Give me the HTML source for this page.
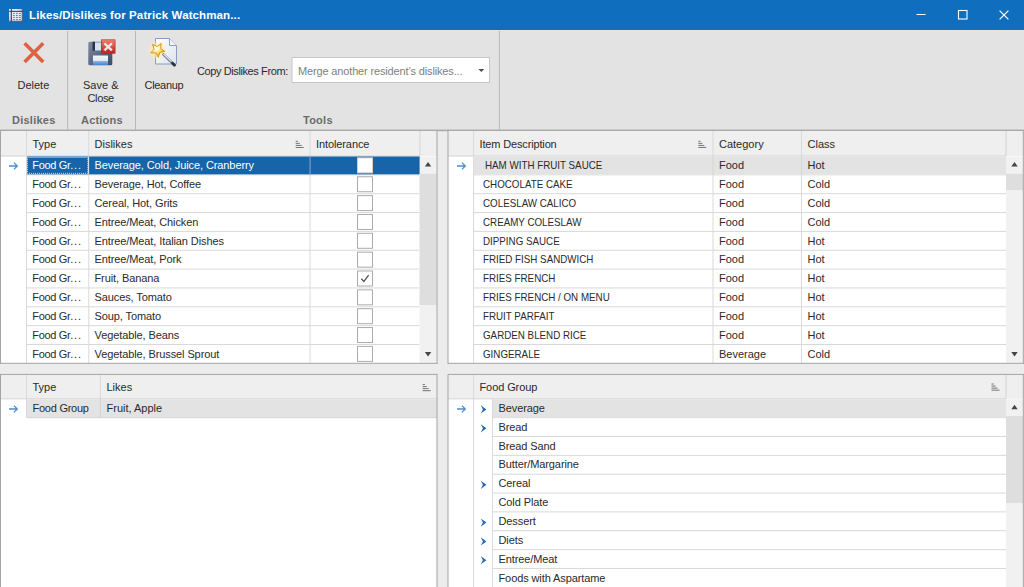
<!DOCTYPE html><html><head><meta charset="utf-8"><style>
*{margin:0;padding:0;box-sizing:border-box}
html,body{width:1024px;height:587px;overflow:hidden;background:#ececec;font-family:"Liberation Sans", sans-serif;font-size:11px;color:#2a2a2a}
.a{position:absolute}
.t{position:absolute;white-space:nowrap;line-height:14px}
.caps{letter-spacing:0px;transform:scaleX(0.89);transform-origin:0 0}
svg{position:absolute;left:0;top:0;overflow:visible}
</style></head><body><svg width="1024" height="587" viewBox="0 0 1024 587"><rect x="0.00" y="0.00" width="1024.00" height="30.00" fill="#106ebe" />
<defs><linearGradient id="ic1" x1="0" y1="0" x2="1" y2="0"><stop offset="0" stop-color="#c9d3e3"/><stop offset="0.5" stop-color="#f4f6fa"/><stop offset="1" stop-color="#aab6ca"/></linearGradient>
<linearGradient id="ic2" x1="0" y1="0" x2="0" y2="1"><stop offset="0" stop-color="#f4f6fa"/><stop offset="1" stop-color="#b9c4d6"/></linearGradient>
<linearGradient id="ic3" x1="0" y1="0" x2="1" y2="1"><stop offset="0" stop-color="#ffffff"/><stop offset="1" stop-color="#d9e0ec"/></linearGradient></defs>
<rect x="9.2" y="9.2" width="13.5" height="12.5" fill="url(#ic3)"/>
<rect x="9.2" y="9.2" width="13.5" height="1.7" fill="url(#ic1)"/>
<rect x="9.2" y="9.2" width="1.7" height="12.5" fill="url(#ic2)"/>
<rect x="9.2" y="10.8" width="13.5" height="1.1" fill="#2f4468"/>
<rect x="10.8" y="9.2" width="1.1" height="12.5" fill="#2f4468"/>
<rect x="21.8" y="9.2" width="0.95" height="12.5" fill="#34496c"/>
<rect x="9.2" y="20.8" width="13.5" height="0.95" fill="#34496c"/>
<g fill="#7d8088">
<rect x="12.9" y="12.8" width="1.9" height="1.1"/><rect x="15.9" y="12.8" width="1.9" height="1.1"/><rect x="18.9" y="12.8" width="1.9" height="1.1"/>
<rect x="12.9" y="14.9" width="1.9" height="1.1"/><rect x="15.9" y="14.9" width="1.9" height="1.1"/><rect x="18.9" y="14.9" width="1.9" height="1.1"/>
<rect x="12.9" y="16.9" width="1.9" height="1.1"/><rect x="15.9" y="16.9" width="1.9" height="1.1"/><rect x="18.9" y="16.9" width="1.9" height="1.1"/>
<rect x="12.9" y="19.0" width="1.9" height="1.1"/><rect x="15.9" y="19.0" width="1.9" height="1.1"/><rect x="18.9" y="19.0" width="1.9" height="1.1"/>
</g>
<rect x="916.5" y="14" width="9" height="1" fill="#fff"/>
<rect x="958.5" y="10.5" width="8.5" height="8.5" fill="none" stroke="#fff" stroke-width="1.1"/>
<path d="M999.6 10.6 L1008.4 19.4 M1008.4 10.6 L999.6 19.4" stroke="#fff" stroke-width="1.2" fill="none"/>
<rect x="0.00" y="30.00" width="1024.00" height="100.50" fill="#e3e3e3" />
<rect x="0.00" y="129.60" width="1024.00" height="1.60" fill="#a9a9a9" />
<rect x="67.10" y="31.00" width="1.00" height="99.00" fill="#b8b8b8" />
<rect x="135.00" y="31.00" width="1.00" height="99.00" fill="#b8b8b8" />
<rect x="498.90" y="31.00" width="1.00" height="99.00" fill="#b8b8b8" />
<path d="M24.6 43.3 L43.2 61.9 M43.2 43.3 L24.6 61.9" stroke="#de6242" stroke-width="3.6" fill="none"/>
<defs>
<linearGradient id="fb" x1="0" y1="0" x2="1" y2="1"><stop offset="0" stop-color="#7c8aa3"/><stop offset="1" stop-color="#3d4b66"/></linearGradient>
<linearGradient id="lb" x1="0" y1="0" x2="0" y2="1"><stop offset="0" stop-color="#f4f6fa"/><stop offset="0.55" stop-color="#e4e8f0"/><stop offset="0.6" stop-color="#8bb4e0"/><stop offset="1" stop-color="#3f86cf"/></linearGradient>
<linearGradient id="rx" x1="0" y1="0" x2="0" y2="1"><stop offset="0" stop-color="#f0806c"/><stop offset="1" stop-color="#c0211c"/></linearGradient>
<linearGradient id="pg" x1="0" y1="0" x2="1" y2="1"><stop offset="0" stop-color="#ffffff"/><stop offset="1" stop-color="#dde3ef"/></linearGradient>
<radialGradient id="st" cx="0.35" cy="0.3" r="0.75"><stop offset="0" stop-color="#ffffff"/><stop offset="0.35" stop-color="#fff3b0"/><stop offset="0.7" stop-color="#f6c933"/><stop offset="1" stop-color="#eda21e"/></radialGradient>
<radialGradient id="gl" cx="0.5" cy="0.5" r="0.5"><stop offset="0" stop-color="#fff2a0" stop-opacity="1"/><stop offset="0.6" stop-color="#fff2a0" stop-opacity="0.6"/><stop offset="1" stop-color="#fff2a0" stop-opacity="0"/></radialGradient>
</defs>
<g transform="translate(86,38)">
<rect x="2.3" y="3.7" width="24" height="23.5" rx="1.5" fill="url(#fb)"/>
<rect x="6.5" y="3.7" width="2.5" height="9" fill="#2c3548"/>
<rect x="9" y="4.5" width="6" height="8" fill="#d5e2f0"/>
<rect x="7" y="17.5" width="15" height="9.5" fill="url(#lb)"/>
<rect x="15.3" y="1.8" width="13.8" height="13.5" fill="url(#rx)" stroke="#b02a22" stroke-width="0.6"/>
<path d="M18.4 5.4 L25.9 12.3 M25.9 5.4 L18.4 12.3" stroke="#ece6e6" stroke-width="2.3"/>
</g>
<g transform="translate(148,36)">
<path d="M7.5 2.5 H21.5 L28.5 9.5 V28 H7.5 Z" fill="url(#pg)" stroke="#8d9cc6" stroke-width="1"/>
<path d="M21.5 2.5 V9.5 H28.5" fill="#f2f4f8" stroke="#8d9cc6" stroke-width="1"/>
<circle cx="9.5" cy="14" r="10" fill="url(#gl)"/>
<path d="M15.5 18.5 L26.6 29.2" stroke="#7a8394" stroke-width="2.6" stroke-linecap="round"/>
<path d="M15.6 18.0 L23.5 25.6" stroke="#e2e7ef" stroke-width="1.2"/>
<path d="M24.5 27.2 L26.6 29.2" stroke="#2a3242" stroke-width="2.6" stroke-linecap="round"/>
<path d="M4.55 8.40 L9.14 10.52 L13.20 7.49 L12.61 12.52 L16.74 15.44 L11.78 16.43 L10.27 21.26 L7.80 16.84 L2.74 16.91 L6.17 13.19 Z" fill="url(#st)" stroke="#e0902a" stroke-width="1" stroke-linejoin="round"/>
</g>
<rect x="292.00" y="57.50" width="197.50" height="25.00" fill="#fff" stroke="#c6c6c6" stroke-width="1"/>
<path d="M478.3 68.9 H484.3 L481.3 72.1 Z" fill="#505050"/>
<rect x="0.00" y="131.00" width="437.00" height="232.30" fill="#fff" />
<rect x="0.00" y="131.00" width="437.00" height="25.00" fill="#efefef" />
<rect x="0.00" y="155.50" width="419.60" height="1.00" fill="#d4d4d4" />
<rect x="26.00" y="131.00" width="1.00" height="232.00" fill="#d9d9d9" />
<rect x="88.30" y="131.00" width="1.00" height="232.00" fill="#d9d9d9" />
<rect x="309.56" y="131.00" width="1.00" height="232.00" fill="#d9d9d9" />
<rect x="26.50" y="174.35" width="393.10" height="1.00" fill="#d9d9d9" />
<rect x="26.50" y="193.20" width="393.10" height="1.00" fill="#d9d9d9" />
<rect x="26.50" y="212.05" width="393.10" height="1.00" fill="#d9d9d9" />
<rect x="26.50" y="230.90" width="393.10" height="1.00" fill="#d9d9d9" />
<rect x="26.50" y="249.75" width="393.10" height="1.00" fill="#d9d9d9" />
<rect x="26.50" y="268.60" width="393.10" height="1.00" fill="#d9d9d9" />
<rect x="26.50" y="287.45" width="393.10" height="1.00" fill="#d9d9d9" />
<rect x="26.50" y="306.30" width="393.10" height="1.00" fill="#d9d9d9" />
<rect x="26.50" y="325.15" width="393.10" height="1.00" fill="#d9d9d9" />
<rect x="26.50" y="344.00" width="393.10" height="1.00" fill="#d9d9d9" />
<rect x="27.00" y="156.50" width="393.00" height="17.85" fill="#1764a8" />
<rect x="88.10" y="156.50" width="1.00" height="17.85" fill="#e4ebf3" />
<rect x="309.56" y="156.50" width="1.00" height="17.85" fill="#86a9cf" />
<rect x="27.5" y="157.50" width="60.3" height="15.85" fill="none" stroke="#d6e4f2" stroke-width="1" stroke-dasharray="1 1"/>
<rect x="357.50" y="157.90" width="15.00" height="15.00" fill="#fff" stroke="#d9cdc4" stroke-width="1"/>
<rect x="357.50" y="176.75" width="15.00" height="15.00" fill="#fff" stroke="#ababab" stroke-width="1"/>
<rect x="357.50" y="195.60" width="15.00" height="15.00" fill="#fff" stroke="#ababab" stroke-width="1"/>
<rect x="357.50" y="214.45" width="15.00" height="15.00" fill="#fff" stroke="#ababab" stroke-width="1"/>
<rect x="357.50" y="233.30" width="15.00" height="15.00" fill="#fff" stroke="#ababab" stroke-width="1"/>
<rect x="357.50" y="252.15" width="15.00" height="15.00" fill="#fff" stroke="#ababab" stroke-width="1"/>
<rect x="357.50" y="271.00" width="15.00" height="15.00" fill="#fff" stroke="#ababab" stroke-width="1"/>
<path d="M361.3 278.8 L363.9 281.5 L368.6 275.1" stroke="#555" stroke-width="1.3" fill="none"/>
<rect x="357.50" y="289.85" width="15.00" height="15.00" fill="#fff" stroke="#ababab" stroke-width="1"/>
<rect x="357.50" y="308.70" width="15.00" height="15.00" fill="#fff" stroke="#ababab" stroke-width="1"/>
<rect x="357.50" y="327.55" width="15.00" height="15.00" fill="#fff" stroke="#ababab" stroke-width="1"/>
<rect x="357.50" y="346.40" width="15.00" height="15.00" fill="#fff" stroke="#ababab" stroke-width="1"/>
<path d="M9 166 H17.2 M13.9 162.6 L17.3 166 L13.9 169.4" stroke="#4f8dcc" stroke-width="1.3" fill="none"/>
<rect x="295.70" y="140.80" width="2.20" height="1.05" fill="#7a7a7a" />
<rect x="295.70" y="142.85" width="4.10" height="1.05" fill="#7a7a7a" />
<rect x="295.70" y="144.90" width="6.00" height="1.05" fill="#7a7a7a" />
<rect x="295.70" y="146.95" width="8.00" height="1.05" fill="#7a7a7a" />
<rect x="419.60" y="156.50" width="16.90" height="206.30" fill="#f1f1f1" />
<rect x="419.60" y="173.80" width="16.90" height="131.20" fill="#dedede" />
<path d="M424.85 166.5 L428.05 162.0 L431.25 166.5 Z" fill="#454545"/>
<path d="M424.85 351.90000000000003 L428.05 356.40000000000003 L431.25 351.90000000000003 Z" fill="#454545"/>
<rect x="0.00" y="131.00" width="1.00" height="232.50" fill="#a4a4a4" />
<rect x="436.50" y="131.00" width="1.00" height="232.80" fill="#a4a4a4" />
<rect x="0.00" y="362.80" width="437.50" height="1.00" fill="#a4a4a4" />
<rect x="448.00" y="131.00" width="575.00" height="232.30" fill="#fff" />
<rect x="448.00" y="131.00" width="575.00" height="25.00" fill="#efefef" />
<rect x="448.00" y="155.50" width="558.00" height="1.00" fill="#d4d4d4" />
<rect x="473.10" y="131.00" width="1.00" height="232.00" fill="#d9d9d9" />
<rect x="712.50" y="131.00" width="1.00" height="232.00" fill="#d9d9d9" />
<rect x="801.00" y="131.00" width="1.00" height="232.00" fill="#d9d9d9" />
<rect x="1005.50" y="131.00" width="1.00" height="25.00" fill="#d4d4d4" />
<rect x="419.40" y="131.00" width="1.00" height="25.00" fill="#d4d4d4" />
<rect x="473.60" y="174.35" width="532.40" height="1.00" fill="#d9d9d9" />
<rect x="473.60" y="193.20" width="532.40" height="1.00" fill="#d9d9d9" />
<rect x="473.60" y="212.05" width="532.40" height="1.00" fill="#d9d9d9" />
<rect x="473.60" y="230.90" width="532.40" height="1.00" fill="#d9d9d9" />
<rect x="473.60" y="249.75" width="532.40" height="1.00" fill="#d9d9d9" />
<rect x="473.60" y="268.60" width="532.40" height="1.00" fill="#d9d9d9" />
<rect x="473.60" y="287.45" width="532.40" height="1.00" fill="#d9d9d9" />
<rect x="473.60" y="306.30" width="532.40" height="1.00" fill="#d9d9d9" />
<rect x="473.60" y="325.15" width="532.40" height="1.00" fill="#d9d9d9" />
<rect x="473.60" y="344.00" width="532.40" height="1.00" fill="#d9d9d9" />
<rect x="474.10" y="156.50" width="531.90" height="17.85" fill="#e3e3e3" />
<rect x="712.50" y="156.00" width="1.00" height="18.85" fill="#d6d6d6" />
<rect x="801.00" y="156.00" width="1.00" height="18.85" fill="#d6d6d6" />
<path d="M457 166 H465.2 M461.9 162.6 L465.3 166 L461.9 169.4" stroke="#4f8dcc" stroke-width="1.3" fill="none"/>
<rect x="698.30" y="140.80" width="2.20" height="1.05" fill="#7a7a7a" />
<rect x="698.30" y="142.85" width="4.10" height="1.05" fill="#7a7a7a" />
<rect x="698.30" y="144.90" width="6.00" height="1.05" fill="#7a7a7a" />
<rect x="698.30" y="146.95" width="8.00" height="1.05" fill="#7a7a7a" />
<rect x="1006.00" y="156.50" width="17.00" height="206.30" fill="#f1f1f1" />
<rect x="1006.00" y="173.80" width="17.00" height="16.30" fill="#dedede" />
<path d="M1011.3 166.5 L1014.5 162.0 L1017.7 166.5 Z" fill="#454545"/>
<path d="M1011.3 351.90000000000003 L1014.5 356.40000000000003 L1017.7 351.90000000000003 Z" fill="#454545"/>
<rect x="447.50" y="131.00" width="1.00" height="232.80" fill="#a4a4a4" />
<rect x="1022.80" y="131.00" width="1.00" height="232.80" fill="#a4a4a4" />
<rect x="448.00" y="362.80" width="576.00" height="1.00" fill="#a4a4a4" />
<rect x="0.00" y="374.40" width="437.00" height="212.60" fill="#fff" />
<rect x="0.00" y="374.40" width="437.00" height="24.40" fill="#efefef" />
<rect x="0.00" y="398.30" width="437.00" height="1.00" fill="#d4d4d4" />
<rect x="26.00" y="374.40" width="1.00" height="43.25" fill="#d9d9d9" />
<rect x="99.90" y="374.40" width="1.00" height="43.25" fill="#d9d9d9" />
<rect x="27.00" y="399.30" width="410.00" height="18.35" fill="#e3e3e3" />
<rect x="99.90" y="398.80" width="1.00" height="18.85" fill="#d2d2d2" />
<rect x="26.50" y="417.15" width="410.50" height="1.00" fill="#d4d4d4" />
<path d="M9 409 H17.2 M13.9 405.6 L17.3 409 L13.9 412.4" stroke="#4f8dcc" stroke-width="1.3" fill="none"/>
<rect x="422.70" y="384.00" width="2.20" height="1.05" fill="#7a7a7a" />
<rect x="422.70" y="386.05" width="4.10" height="1.05" fill="#7a7a7a" />
<rect x="422.70" y="388.10" width="6.00" height="1.05" fill="#7a7a7a" />
<rect x="422.70" y="390.15" width="8.00" height="1.05" fill="#7a7a7a" />
<rect x="0.00" y="374.40" width="1.00" height="212.60" fill="#a4a4a4" />
<rect x="436.50" y="374.40" width="1.00" height="212.60" fill="#a4a4a4" />
<rect x="0.00" y="373.90" width="437.50" height="1.00" fill="#a4a4a4" />
<rect x="448.00" y="374.40" width="575.00" height="212.60" fill="#fff" />
<rect x="448.00" y="374.40" width="575.00" height="24.40" fill="#efefef" />
<rect x="448.00" y="398.30" width="558.00" height="1.00" fill="#d4d4d4" />
<rect x="473.10" y="374.40" width="1.00" height="212.60" fill="#d9d9d9" />
<rect x="1005.50" y="374.40" width="1.00" height="24.40" fill="#d4d4d4" />
<rect x="492.00" y="398.80" width="1.00" height="188.20" fill="#d9d9d9" />
<rect x="492.50" y="417.15" width="513.50" height="1.00" fill="#d9d9d9" />
<rect x="492.50" y="436.00" width="513.50" height="1.00" fill="#d9d9d9" />
<rect x="492.50" y="454.85" width="513.50" height="1.00" fill="#d9d9d9" />
<rect x="492.50" y="473.70" width="513.50" height="1.00" fill="#d9d9d9" />
<rect x="492.50" y="492.55" width="513.50" height="1.00" fill="#d9d9d9" />
<rect x="492.50" y="511.40" width="513.50" height="1.00" fill="#d9d9d9" />
<rect x="492.50" y="530.25" width="513.50" height="1.00" fill="#d9d9d9" />
<rect x="492.50" y="549.10" width="513.50" height="1.00" fill="#d9d9d9" />
<rect x="492.50" y="567.95" width="513.50" height="1.00" fill="#d9d9d9" />
<rect x="493.00" y="399.30" width="513.00" height="17.85" fill="#e3e3e3" />
<path d="M480.8 405.32 L486.4 409.43 L480.8 413.53 L482.9 409.43 Z" fill="#2568ae"/>
<path d="M480.8 424.18 L486.4 428.28 L480.8 432.38 L482.9 428.28 Z" fill="#2568ae"/>
<path d="M480.8 480.73 L486.4 484.83 L480.8 488.93 L482.9 484.83 Z" fill="#2568ae"/>
<path d="M480.8 518.43 L486.4 522.53 L480.8 526.63 L482.9 522.53 Z" fill="#2568ae"/>
<path d="M480.8 537.27 L486.4 541.38 L480.8 545.48 L482.9 541.38 Z" fill="#2568ae"/>
<path d="M480.8 556.12 L486.4 560.23 L480.8 564.33 L482.9 560.23 Z" fill="#2568ae"/>
<path d="M480.8 593.82 L486.4 597.92 L480.8 602.02 L482.9 597.92 Z" fill="#2568ae"/>
<path d="M457 409 H465.2 M461.9 405.6 L465.3 409 L461.9 412.4" stroke="#4f8dcc" stroke-width="1.3" fill="none"/>
<rect x="991.50" y="383.50" width="2.20" height="1.05" fill="#7a7a7a" />
<rect x="991.50" y="385.55" width="4.10" height="1.05" fill="#7a7a7a" />
<rect x="991.50" y="387.60" width="6.00" height="1.05" fill="#7a7a7a" />
<rect x="991.50" y="389.65" width="8.00" height="1.05" fill="#7a7a7a" />
<rect x="1006.00" y="399.30" width="17.00" height="187.70" fill="#f1f1f1" />
<rect x="1006.00" y="416.00" width="17.00" height="87.00" fill="#dedede" />
<path d="M1011.3 409.3 L1014.5 404.8 L1017.7 409.3 Z" fill="#454545"/>
<rect x="447.50" y="374.40" width="1.00" height="212.60" fill="#a4a4a4" />
<rect x="1022.80" y="374.40" width="1.00" height="212.60" fill="#a4a4a4" />
<rect x="448.00" y="373.90" width="576.00" height="1.00" fill="#a4a4a4" /></svg>
<div class="t " style="left:29px;top:7px;color:#fff;font-weight:bold;font-size:11.5px;line-height:16px;letter-spacing:0.12px">Likes/Dislikes for Patrick Watchman...</div>
<div class="t " style="left:17.5px;top:78px;">Delete</div>
<div class="t " style="left:83px;top:78px;">Save &amp;</div>
<div class="t " style="left:87.5px;top:91px;letter-spacing:-0.35px">Close</div>
<div class="t " style="left:144.5px;top:78px;letter-spacing:-0.3px">Cleanup</div>
<div class="t " style="left:12px;top:113px;font-weight:bold;color:#6b6b6b;letter-spacing:0.25px">Dislikes</div>
<div class="t " style="left:81px;top:113px;font-weight:bold;color:#6b6b6b;letter-spacing:0.2px">Actions</div>
<div class="t " style="left:303px;top:113px;font-weight:bold;color:#6b6b6b;letter-spacing:0.25px">Tools</div>
<div class="t " style="left:197px;top:63.5px;letter-spacing:-0.4px">Copy Dislikes From:</div>
<div class="t " style="left:298px;top:63.5px;color:#808080;letter-spacing:-0.15px">Merge another resident’s dislikes...</div>
<div class="t " style="left:32.3px;top:158.1px;color:#fff;letter-spacing:-0.35px">Food Gr<span style="letter-spacing:0.8px">...</span></div>
<div class="t " style="left:94.5px;top:158.1px;color:#fff;letter-spacing:-0.1px">Beverage, Cold, Juice, Cranberry</div>
<div class="t " style="left:32.3px;top:176.95px;color:#2a2a2a;letter-spacing:-0.35px">Food Gr<span style="letter-spacing:0.8px">...</span></div>
<div class="t " style="left:94.5px;top:176.95px;color:#2a2a2a;letter-spacing:-0.1px">Beverage, Hot, Coffee</div>
<div class="t " style="left:32.3px;top:195.79999999999998px;color:#2a2a2a;letter-spacing:-0.35px">Food Gr<span style="letter-spacing:0.8px">...</span></div>
<div class="t " style="left:94.5px;top:195.79999999999998px;color:#2a2a2a;letter-spacing:-0.1px">Cereal, Hot, Grits</div>
<div class="t " style="left:32.3px;top:214.65px;color:#2a2a2a;letter-spacing:-0.35px">Food Gr<span style="letter-spacing:0.8px">...</span></div>
<div class="t " style="left:94.5px;top:214.65px;color:#2a2a2a;letter-spacing:-0.1px">Entree/Meat, Chicken</div>
<div class="t " style="left:32.3px;top:233.5px;color:#2a2a2a;letter-spacing:-0.35px">Food Gr<span style="letter-spacing:0.8px">...</span></div>
<div class="t " style="left:94.5px;top:233.5px;color:#2a2a2a;letter-spacing:-0.1px">Entree/Meat, Italian Dishes</div>
<div class="t " style="left:32.3px;top:252.35px;color:#2a2a2a;letter-spacing:-0.35px">Food Gr<span style="letter-spacing:0.8px">...</span></div>
<div class="t " style="left:94.5px;top:252.35px;color:#2a2a2a;letter-spacing:-0.1px">Entree/Meat, Pork</div>
<div class="t " style="left:32.3px;top:271.20000000000005px;color:#2a2a2a;letter-spacing:-0.35px">Food Gr<span style="letter-spacing:0.8px">...</span></div>
<div class="t " style="left:94.5px;top:271.20000000000005px;color:#2a2a2a;letter-spacing:-0.1px">Fruit, Banana</div>
<div class="t " style="left:32.3px;top:290.05000000000007px;color:#2a2a2a;letter-spacing:-0.35px">Food Gr<span style="letter-spacing:0.8px">...</span></div>
<div class="t " style="left:94.5px;top:290.05000000000007px;color:#2a2a2a;letter-spacing:-0.1px">Sauces, Tomato</div>
<div class="t " style="left:32.3px;top:308.90000000000003px;color:#2a2a2a;letter-spacing:-0.35px">Food Gr<span style="letter-spacing:0.8px">...</span></div>
<div class="t " style="left:94.5px;top:308.90000000000003px;color:#2a2a2a;letter-spacing:-0.1px">Soup, Tomato</div>
<div class="t " style="left:32.3px;top:327.75px;color:#2a2a2a;letter-spacing:-0.35px">Food Gr<span style="letter-spacing:0.8px">...</span></div>
<div class="t " style="left:94.5px;top:327.75px;color:#2a2a2a;letter-spacing:-0.1px">Vegetable, Beans</div>
<div class="t " style="left:32.3px;top:346.6px;color:#2a2a2a;letter-spacing:-0.35px">Food Gr<span style="letter-spacing:0.8px">...</span></div>
<div class="t " style="left:94.5px;top:346.6px;color:#2a2a2a;letter-spacing:-0.1px">Vegetable, Brussel Sprout</div>
<div class="t " style="left:32.5px;top:136.6px;">Type</div>
<div class="t " style="left:94.5px;top:136.6px;">Dislikes</div>
<div class="t " style="left:316px;top:136.6px;letter-spacing:-0.1px">Intolerance</div>
<div class="t caps" style="left:485.0px;top:158.1px;">HAM WITH FRUIT SAUCE</div>
<div class="t " style="left:719px;top:158.1px;">Food</div>
<div class="t " style="left:807.5px;top:158.1px;">Hot</div>
<div class="t caps" style="left:482.5px;top:176.95px;">CHOCOLATE CAKE</div>
<div class="t " style="left:719px;top:176.95px;">Food</div>
<div class="t " style="left:807.5px;top:176.95px;">Cold</div>
<div class="t caps" style="left:482.5px;top:195.79999999999998px;">COLESLAW CALICO</div>
<div class="t " style="left:719px;top:195.79999999999998px;">Food</div>
<div class="t " style="left:807.5px;top:195.79999999999998px;">Cold</div>
<div class="t caps" style="left:482.5px;top:214.65px;">CREAMY COLESLAW</div>
<div class="t " style="left:719px;top:214.65px;">Food</div>
<div class="t " style="left:807.5px;top:214.65px;">Cold</div>
<div class="t caps" style="left:482.5px;top:233.5px;">DIPPING SAUCE</div>
<div class="t " style="left:719px;top:233.5px;">Food</div>
<div class="t " style="left:807.5px;top:233.5px;">Hot</div>
<div class="t caps" style="left:482.5px;top:252.35px;">FRIED FISH SANDWICH</div>
<div class="t " style="left:719px;top:252.35px;">Food</div>
<div class="t " style="left:807.5px;top:252.35px;">Hot</div>
<div class="t caps" style="left:482.5px;top:271.20000000000005px;">FRIES FRENCH</div>
<div class="t " style="left:719px;top:271.20000000000005px;">Food</div>
<div class="t " style="left:807.5px;top:271.20000000000005px;">Hot</div>
<div class="t caps" style="left:482.5px;top:290.05000000000007px;">FRIES FRENCH / ON MENU</div>
<div class="t " style="left:719px;top:290.05000000000007px;">Food</div>
<div class="t " style="left:807.5px;top:290.05000000000007px;">Hot</div>
<div class="t caps" style="left:482.5px;top:308.90000000000003px;">FRUIT PARFAIT</div>
<div class="t " style="left:719px;top:308.90000000000003px;">Food</div>
<div class="t " style="left:807.5px;top:308.90000000000003px;">Hot</div>
<div class="t caps" style="left:482.5px;top:327.75px;">GARDEN BLEND RICE</div>
<div class="t " style="left:719px;top:327.75px;">Food</div>
<div class="t " style="left:807.5px;top:327.75px;">Hot</div>
<div class="t caps" style="left:482.5px;top:346.6px;">GINGERALE</div>
<div class="t " style="left:719px;top:346.6px;">Beverage</div>
<div class="t " style="left:807.5px;top:346.6px;">Cold</div>
<div class="t " style="left:479.5px;top:136.6px;letter-spacing:-0.15px">Item Description</div>
<div class="t " style="left:719px;top:136.6px;">Category</div>
<div class="t " style="left:807.5px;top:136.6px;">Class</div>
<div class="t " style="left:32.5px;top:401.40000000000003px;letter-spacing:-0.25px">Food Group</div>
<div class="t " style="left:106.5px;top:401.40000000000003px;">Fruit, Apple</div>
<div class="t " style="left:32.5px;top:379.8px;">Type</div>
<div class="t " style="left:106.5px;top:379.8px;">Likes</div>
<div class="t " style="left:498.5px;top:400.90000000000003px;letter-spacing:-0.1px">Beverage</div>
<div class="t " style="left:498.5px;top:419.75000000000006px;letter-spacing:-0.1px">Bread</div>
<div class="t " style="left:498.5px;top:438.6px;letter-spacing:-0.1px">Bread Sand</div>
<div class="t " style="left:498.5px;top:457.45000000000005px;letter-spacing:-0.1px">Butter/Margarine</div>
<div class="t " style="left:498.5px;top:476.30000000000007px;letter-spacing:-0.1px">Cereal</div>
<div class="t " style="left:498.5px;top:495.15000000000003px;letter-spacing:-0.1px">Cold Plate</div>
<div class="t " style="left:498.5px;top:514.0px;letter-spacing:-0.1px">Dessert</div>
<div class="t " style="left:498.5px;top:532.85px;letter-spacing:-0.1px">Diets</div>
<div class="t " style="left:498.5px;top:551.7px;letter-spacing:-0.1px">Entree/Meat</div>
<div class="t " style="left:498.5px;top:570.5500000000001px;letter-spacing:-0.1px">Foods with Aspartame</div>
<div class="t " style="left:498.5px;top:589.4px;letter-spacing:-0.1px">Fruit</div>
<div class="t " style="left:479.5px;top:379.8px;letter-spacing:-0.1px">Food Group</div></body></html>
